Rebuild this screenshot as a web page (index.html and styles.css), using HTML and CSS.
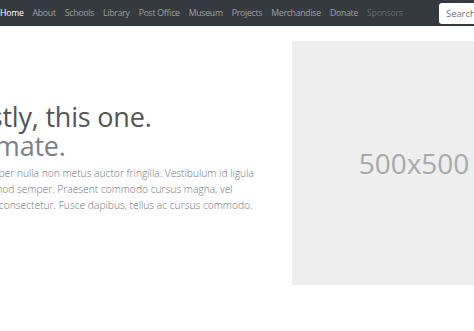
FILE: index.html
```html
<!DOCTYPE html>
<html lang="en">

<head>
    <meta charset="UTF-8">
    <meta name="viewport" content="width=device-width, initial-scale=1.0">
    <title>Featurette</title>
    <link rel="stylesheet" href="styles.css">
</head>

<body>
    <nav class="navbar">
        <ul class="nav-list">
            <li><a class="nav-link active" href="#">Home</a></li>
            <li><a class="nav-link" href="#">About</a></li>
            <li><a class="nav-link" href="#">Schools</a></li>
            <li><a class="nav-link" href="#">Library</a></li>
            <li><a class="nav-link" href="#">Post Office</a></li>
            <li><a class="nav-link" href="#">Museum</a></li>
            <li><a class="nav-link" href="#">Projects</a></li>
            <li><a class="nav-link" href="#">Merchandise</a></li>
            <li><a class="nav-link" href="#">Donate</a></li>
            <li><a class="nav-link disabled" href="#">Sponsors</a></li>
        </ul>
        <form class="search">
            <input class="search-input" type="text" placeholder="Search">
        </form>
    </nav>

    <!-- featurette -->
    <main class="featurette">
        <div class="featurette-text">
            <h2 class="featurette-heading">And lastly, this one.<br><span class="muted">Checkmate.</span></h2>
            <p class="lead">Donec ullamcorper nulla non metus auctor fringilla. Vestibulum id ligula<br>porta felis euismod semper. Praesent commodo cursus magna, vel<br>scelerisque nisl consectetur. Fusce dapibus, tellus ac cursus commodo.</p>
        </div>
        <div class="placeholder">
            <span class="placeholder-label">500x500</span>
        </div>
    </main>
</body>

</html>
```

FILE: styles.css
```css
html,
body {
    margin: 0;
    overflow: hidden;
}

body {
    font-family: "Open Sans", "Noto Sans", sans-serif;
    background: #fff;
}

/* navbar */
.navbar {
    display: flex;
    align-items: center;
    height: 26px;
    background: #343a40;
    overflow: hidden;
}
.nav-list {
    display: flex;
    flex-shrink: 0;
    margin: 0;
    padding: 0;
    list-style: none;
    white-space: nowrap;
}
.nav-link {
    display: block;
    padding: 0 4.5px;
    font-size: 8.7px;
    letter-spacing: -.25px;
    line-height: 26px;
    color: rgba(255, 255, 255, .5);
    text-decoration: none;
}
.nav-list li:first-child .nav-link {
    padding-left: 0;
}
.nav-link.active {
    color: #fff;
}
.nav-link.disabled {
    color: rgba(255, 255, 255, .25);
}
.search {
    margin-left: auto;
    flex-shrink: 0;
}
.search-input {
    display: block;
    box-sizing: border-box;
    width: 60px;
    height: 21px;
    margin-right: -25px;
    padding: 0 7px;
    border: 0;
    border-radius: 3px;
    font-family: inherit;
    font-size: 9.4px;
    background: #fff;
}
.search-input::placeholder {
    color: #6c757d;
}

/* featurette */
.featurette {
    display: flex;
    align-items: center;
    margin-top: 15px;
}
.featurette-text {
    flex-shrink: 0;
    width: 300px;
    margin-left: -74px;
    margin-right: 66px;
    margin-bottom: 10px;
    white-space: nowrap;
}
.featurette-heading {
    margin: 0 0 5px -6px;
    font-size: 27px;
    font-weight: 400;
    line-height: 1.05;
    letter-spacing: -.2px;
    text-indent: -8px;
    color: #555;
}
.muted {
    color: #7b8188;
}
.lead {
    margin: 0;
    font-size: 10.25px;
    font-weight: 300;
    line-height: 16px;
    color: #6c757d;
}
.placeholder {
    display: flex;
    flex-shrink: 0;
    align-items: center;
    justify-content: center;
    width: 244px;
    height: 244px;
    background: #eee;
}
.placeholder-label {
    font-size: 28px;
    color: #aaa;
}
```
